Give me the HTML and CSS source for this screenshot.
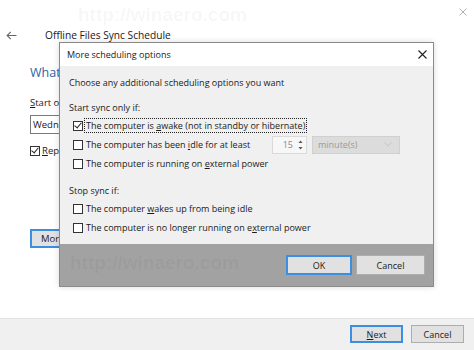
FILE: index.html
```html
<!DOCTYPE html>
<html>
<head>
<meta charset="utf-8">
<link rel="stylesheet" href="styles.css">
</head>
<body>
<div class="window">
  <svg class="win-close" width="8" height="8" viewBox="0 0 8 8"><path d="M0.5 0.5L7.5 7.5M7.5 0.5L0.5 7.5" stroke="#b0b0b0" stroke-width="1"/></svg>
  <div class="header">
    <svg class="back" width="11" height="9" viewBox="0 0 11 9"><path d="M10.5 4.5H1.2M4.8 0.8L1.1 4.5L4.8 8.2" stroke="#666" stroke-width="1.1" fill="none"/></svg>
    <span class="wtitle">Offline Files Sync Schedule</span>
  </div>
  <div class="content">
    <div class="instr">What</div>
    <div class="label"><u>S</u>tart on</div>
    <div class="input">Wedne</div>
    <div class="repeat"><span class="cb checked"></span><span><u>R</u>ep</span></div>
    <div class="more-row"><button class="btn more">Mor</button></div>
  </div>
  <div class="bottom">
    <button class="btn primary"><u>N</u>ext</button>
    <button class="btn">Cancel</button>
  </div>

  <div class="dialog">
    <div class="dtitle">
      <span>More scheduling options</span>
      <svg class="dclose" width="9" height="9" viewBox="0 0 9 9"><path d="M0.5 0.5L8.5 8.5M8.5 0.5L0.5 8.5" stroke="#222" stroke-width="1.1"/></svg>
    </div>
    <div class="dbody">
      <div class="intro">Choose any additional scheduling options you want</div>
      <div class="group">Start sync only if:</div>
      <div class="row"><span class="cb checked"></span><span class="focus">The computer is <u>a</u>wake (not in standby or hibernate)</span></div>
      <div class="row"><span class="cb"></span><span class="lbl idle">The computer has been <u>i</u>dle for at least</span>
        <span class="spin"><span class="num">15</span><svg class="arrows" width="5" height="10" viewBox="0 0 5 10"><path d="M2.5 0.5L4.5 3H0.5Z M2.5 9.5L4.5 7H0.5Z" fill="#555"/></svg></span>
        <span class="select">minute(s)<svg width="8" height="5" viewBox="0 0 8 5"><path d="M0.5 0.5L4 4L7.5 0.5" stroke="#c4c4c4" fill="none"/></svg></span>
      </div>
      <div class="row"><span class="cb"></span><span class="lbl">The computer is running on <u>e</u>xternal power</span></div>
      <div class="group stop">Stop sync if:</div>
      <div class="row"><span class="cb"></span><span class="lbl">The computer <u>w</u>akes up from being idle</span></div>
      <div class="row"><span class="cb"></span><span class="lbl">The computer is no longer running on e<u>x</u>ternal power</span></div>
    </div>
    <div class="dfoot">
      <button class="btn primary ok">OK</button>
      <button class="btn cancel">Cancel</button>
    </div>
  </div>

  <div class="wm wm1">http://winaero.com</div>
  <div class="wm wm2">http://winaero.com</div>
</div>
</body>
</html>
```
FILE: styles.css
```css
html, body { margin: 0; padding: 0; }
body {
  width: 474px; height: 350px; overflow: hidden; background: #fff;
  font-family: "Open Sans", "Noto Sans", sans-serif; font-size: 9px; color: #1a1a1a;
}
.window { position: relative; width: 474px; height: 350px; display: flex; flex-direction: column; overflow: hidden; }
.win-close { position: absolute; left: 459px; top: 8px; }
.header { display: flex; align-items: center; height: 20px; margin-top: 25px; padding-left: 6px; }
.back { margin-right: 28px; flex: none; }
.wtitle { font-size: 10.2px; }
.content { flex: 1; padding-left: 30px; display: flex; flex-direction: column; }
.instr { margin-top: 18px; font-size: 12.5px; color: #2b63a8; line-height: 20px; }
.label { margin-top: 12px; line-height: 15px; font-size: 9.5px; }
.input { margin-top: 5px; width: 60px; height: 17px; border: 1px solid #7a7a7a; line-height: 17px; padding-left: 2px; font-size: 9.5px; }
.repeat { margin-top: 10px; display: flex; align-items: center; gap: 2px; padding-left: 0; font-size: 9.5px; }
.more-row { margin-top: 72px; }
.btn {
  font-family: inherit; font-size: 9px; color: #1a1a1a; background: #e1e1e1;
  border: 1px solid #adadad; padding: 0; height: 19px; line-height: 15px;
}
.btn.primary { border: 2px solid #3c8ee0; background: #e1e1e1; }
.more { width: 60px; border: 2px solid #3c8ee0; text-align: left; padding-left: 9px; font-size: 9.5px; }
.bottom {
  height: 32px; background: #f0f0f0; border-top: 1px solid #e3e3e3;
  display: flex; justify-content: flex-end; align-items: flex-start; gap: 8px; padding: 6px 10px 0 0; box-sizing: border-box;
}
.bottom .btn { width: 53px; height: 18px; }
.cb { display: inline-block; width: 8px; height: 8px; border: 1px solid #333; background: #fff; position: relative; flex: none; }
.cb.checked::after {
  content: ""; position: absolute; left: 2px; top: -1px; width: 3px; height: 6px;
  border: solid #222; border-width: 0 1.2px 1.2px 0; transform: rotate(40deg);
}

.dialog {
  position: absolute; left: 59px; top: 42px; width: 375px; height: 245px; box-sizing: border-box;
  border: 1px solid #8a8a8a; background: #f0f0f0; display: flex; flex-direction: column;
  box-shadow: 0 0 6px rgba(0,0,0,0.15); z-index: 2;
}
.dtitle { height: 23px; background: #fff; display: flex; align-items: center; justify-content: space-between; padding: 0 6px 0 7px; }
.dbody { flex: 1; padding-left: 9px; display: flex; flex-direction: column; }
.intro { margin-top: 9px; line-height: 16px; }
.group { margin-top: 9px; line-height: 16px; }
.group.stop { margin-top: 10px; }
.row { display: flex; align-items: center; height: 19px; padding-left: 4px; white-space: nowrap; }
.row .cb { margin-right: 3px; }
.focus { outline: 1px dotted #222; padding: 0 1px; line-height: 13px; margin-left: -1px; }
.lbl { flex: none; }
.lbl.idle { width: 186px; }
.spin { width: 35px; height: 18px; border: 1px solid #dadada; background: #f7f7f7; display: flex; align-items: center; justify-content: flex-end; color: #888; box-sizing: border-box; flex: none; padding-right: 3px; }
.spin .num { margin-right: 5px; }
.arrows { flex: none; }
.select { margin-left: 5px; width: 88px; height: 18px; background: #dcdcdc; border: 1px solid #d0d0d0; color: #9a9a9a; display: flex; align-items: center; justify-content: space-between; padding: 0 7px 0 5px; box-sizing: border-box; flex: none; }
.dfoot { height: 42px; background: #a2a2a2; display: flex; justify-content: flex-end; align-items: center; gap: 4px; padding-right: 8px; }
.dfoot .btn { height: 20px; }
.ok { width: 66px; }
.cancel { width: 69px; }
.wm { position: absolute; font-family: "Liberation Sans", sans-serif; font-weight: bold; font-size: 19px; color: rgba(0,0,0,0.045); pointer-events: none; white-space: nowrap; z-index: 3; }
.wm1 { left: 78px; top: 4px; }
.wm2 { left: 70px; top: 252px; }
```
